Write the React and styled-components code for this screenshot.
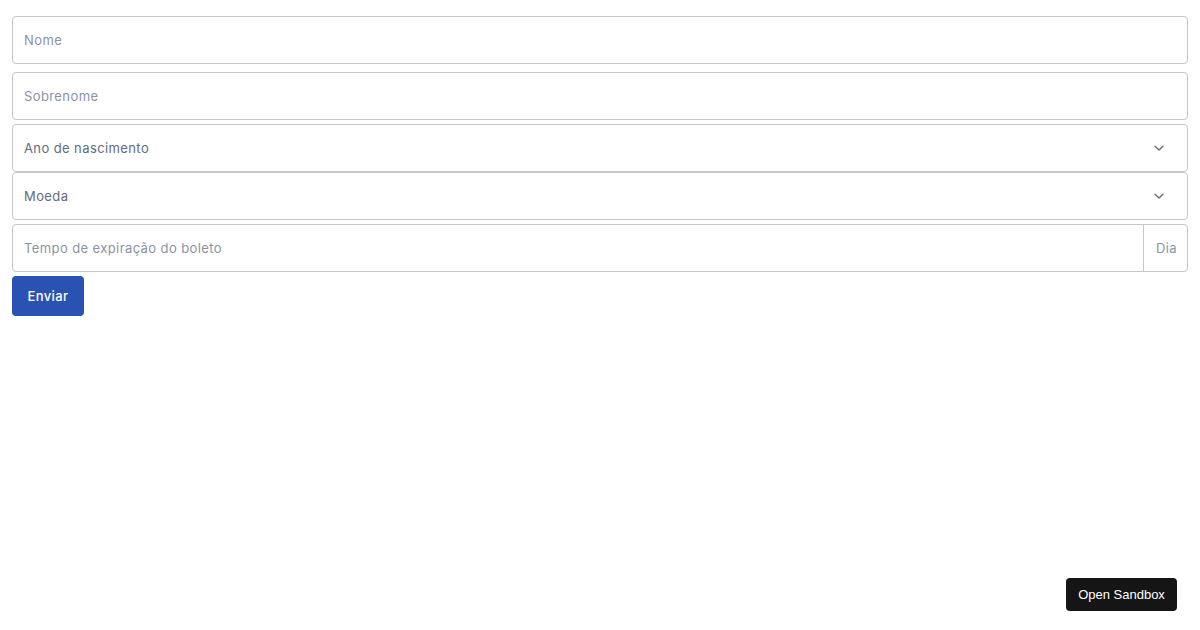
import React from 'react';
import styled, { createGlobalStyle } from 'styled-components';

const GlobalStyle = createGlobalStyle`
  html, body {
    margin: 0;
    padding: 0;
    background: #ffffff;
    font-family: Inter, "Noto Sans", sans-serif;
  }
`;

const Form = styled.form`
  display: flex;
  flex-direction: column;
  padding: 16px 12px;
`;

const Field = styled.div`
  display: flex;
  align-items: center;
  height: 48px;
  box-sizing: border-box;
  border: 1px solid #c6c6cb;
  border-radius: 4px;
  margin-top: ${p => p.$gap || 0}px;
  background: #fff;
`;

const Input = styled.input`
  flex: 1;
  height: 100%;
  border: none;
  outline: none;
  background: transparent;
  padding: 0 11px;
  font-family: Inter, "Noto Sans", sans-serif;
  font-size: 13px;
  letter-spacing: 0.4px;
  color: #3c4456;
  &::placeholder {
    color: #8b93a7;
  }
`;

const SelectLabel = styled.span`
  flex: 1;
  padding: 0 11px;
  font-size: 13px;
  letter-spacing: 0.4px;
  color: #626b7f;
`;

const Chevron = styled.svg`
  width: 12px;
  height: 12px;
  margin-right: 22px;
  color: #6f6883;
`;

const Addon = styled.span`
  height: 100%;
  display: flex;
  align-items: center;
  padding: 0 10px 0 12px;
  border-left: 1px solid #c6c6cb;
  font-size: 13px;
  letter-spacing: 0.4px;
  color: #8b93a7;
`;

const Submit = styled.button`
  align-self: flex-start;
  margin-top: 4px;
  height: 40px;
  width: 72px;
  padding: 0;
  border: none;
  border-radius: 4px;
  background: #2952b3;
  color: #ffffff;
  font-family: Inter, "Noto Sans", sans-serif;
  font-size: 13px;
  font-weight: 500;
  letter-spacing: 0.4px;
`;

const SandboxButton = styled.button`
  position: fixed;
  right: 23px;
  bottom: 19px;
  height: 33px;
  width: 111px;
  padding: 0;
  border: none;
  border-radius: 4px;
  background: #151515;
  color: #ffffff;
  font-family: "Liberation Sans", Arial, sans-serif;
  font-size: 13px;
`;

const ChevronDown = () => (
  <Chevron viewBox="0 0 12 12" fill="none">
    <path d="M2 4.2 6 8l4-3.8" stroke="currentColor" strokeWidth="1.4" strokeLinecap="round" strokeLinejoin="round" />
  </Chevron>
);

export default function App() {
  return (
    <>
      <GlobalStyle />
      <Form onSubmit={e => e.preventDefault()}>
        <Field>
          <Input placeholder="Nome" />
        </Field>
        <Field $gap={8}>
          <Input placeholder="Sobrenome" />
        </Field>
        <Field $gap={4}>
          <SelectLabel>Ano de nascimento</SelectLabel>
          <ChevronDown />
        </Field>
        <Field>
          <SelectLabel>Moeda</SelectLabel>
          <ChevronDown />
        </Field>
        <Field $gap={4}>
          <Input placeholder="Tempo de expiração do boleto" />
          <Addon>Dia</Addon>
        </Field>
        <Submit type="submit">Enviar</Submit>
      </Form>
      <SandboxButton>Open Sandbox</SandboxButton>
    </>
  );
}
